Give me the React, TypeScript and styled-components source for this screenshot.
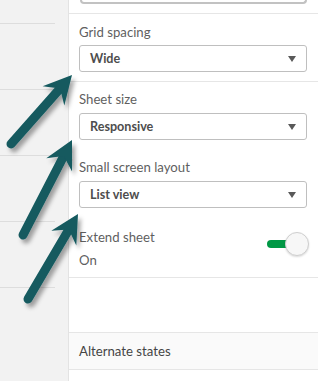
import React from "react";
import styled, { createGlobalStyle } from "styled-components";

const Global = createGlobalStyle`
  html, body { margin: 0; padding: 0; background: #fff; }
  body { font-family: "Source Sans Pro", Lato, "Noto Sans", sans-serif; }
  * { box-sizing: border-box; }
`;

const Page = styled.div`
  position: relative;
  width: 318px;
  height: 381px;
  overflow: hidden;
  display: flex;
`;

const LeftPanel = styled.div`
  width: 69px;
  flex: none;
  background: #f2f2f2;
  border-right: 1px solid #e3e3e3;
  display: flex;
  flex-direction: column;
  padding-top: 23px;
  gap: 65px;
`;

const LeftRule = styled.div`
  width: 55px;
  height: 1px;
  background: #dddddd;
`;

const RightPanel = styled.div`
  flex: 1;
  display: flex;
  flex-direction: column;
  background: #fff;
`;

const TopSection = styled.div`
  height: 14px;
  border-bottom: 1px solid #e6e6e6;
  padding: 0 11px 0 11px;
`;

const ClippedBox = styled.div`
  height: 4px;
  border: 2px solid #c2c2c2;
  border-top: none;
  border-radius: 0 0 4px 4px;
`;

const Group = styled.div<{ $pt: number; $pb: number }>`
  padding: ${(p) => p.$pt}px 11px ${(p) => p.$pb}px 10px;
  border-bottom: 1px solid #e6e6e6;
  display: flex;
  flex-direction: column;
`;

const Label = styled.div<{ $mt?: number }>`
  font-size: 13.2px;
  line-height: 18px;
  color: #5f5f5f;
  margin-top: ${(p) => p.$mt ?? 0}px;
`;

const Select = styled.div<{ $mt: number }>`
  margin-top: ${(p) => p.$mt}px;
  height: 27px;
  border: 1px solid #bfbfbf;
  border-radius: 3px;
  display: flex;
  align-items: center;
  justify-content: space-between;
  padding: 0 10px 0 10px;
  font-size: 12.6px;
  font-weight: 700;
  color: #4d4d4d;
`;

const Caret = styled.span`
  width: 0;
  height: 0;
  border-left: 4.5px solid transparent;
  border-right: 4.5px solid transparent;
  border-top: 6px solid #595959;
`;

const SwitchRow = styled.div`
  margin-top: 20px;
  display: flex;
  justify-content: space-between;
  align-items: flex-start;
`;

const SwitchText = styled.div`
  display: flex;
  flex-direction: column;
  gap: 5px;
`;

const Value = styled.div`
  font-size: 13.2px;
  line-height: 18px;
  color: #5f5f5f;
`;

const Toggle = styled.div`
  position: relative;
  width: 42px;
  height: 24px;
  margin-top: 4px;
  margin-right: -2px;
`;

const Track = styled.div`
  position: absolute;
  left: 0;
  top: 8px;
  width: 30px;
  height: 8px;
  border-radius: 4px;
  background: #009845;
`;

const Knob = styled.div`
  position: absolute;
  right: 0;
  top: 0;
  width: 24px;
  height: 24px;
  border-radius: 50%;
  background: #f7f7f7;
  border: 1px solid #cfcfcf;
  box-shadow: 0 1px 2px rgba(0, 0, 0, 0.15);
`;

const Spacer = styled.div`
  height: 55px;
  border-bottom: 1px solid #e6e6e6;
`;

const SectionHeader = styled.div`
  height: 37px;
  background: #fafafa;
  border-bottom: 1px solid #e6e6e6;
  display: flex;
  align-items: center;
  padding-left: 10px;
  font-size: 13.2px;
  color: #454545;
`;

const Overlay = styled.svg`
  position: absolute;
  left: 0;
  top: 0;
  pointer-events: none;
`;

type Pt = [number, number];

function Arrow({ tail, tip }: { tail: Pt; tip: Pt }) {
  const dx = tip[0] - tail[0];
  const dy = tip[1] - tail[1];
  const len = Math.hypot(dx, dy);
  const ux = dx / len;
  const uy = dy / len;
  const px = -uy;
  const py = ux;
  const headLen = 28;
  const half = 14.5;
  const notch = 18;
  const bx = tip[0] - ux * headLen;
  const by = tip[1] - uy * headLen;
  const left: Pt = [bx + px * half, by + py * half];
  const right: Pt = [bx - px * half, by - py * half];
  const n: Pt = [tip[0] - ux * notch, tip[1] - uy * notch];
  const shaftEnd: Pt = [tip[0] - ux * (notch - 2), tip[1] - uy * (notch - 2)];
  return (
    <g>
      <line
        x1={tail[0]}
        y1={tail[1]}
        x2={shaftEnd[0]}
        y2={shaftEnd[1]}
        stroke="#145a5f"
        strokeWidth={9}
        strokeLinecap="round"
      />
      <polygon
        points={`${tip[0]},${tip[1]} ${left[0]},${left[1]} ${n[0]},${n[1]} ${right[0]},${right[1]}`}
        fill="#145a5f"
      />
    </g>
  );
}

export default function App() {
  return (
    <Page>
      <Global />
      <LeftPanel>
        <LeftRule />
        <LeftRule />
        <LeftRule />
        <LeftRule />
        <LeftRule />
      </LeftPanel>
      <RightPanel>
        <TopSection>
          <ClippedBox />
        </TopSection>
        <Group $pt={9} $pb={9}>
          <Label>Grid spacing</Label>
          <Select $mt={4}>
            Wide
            <Caret />
          </Select>
        </Group>
        <Group $pt={8} $pb={8}>
          <Label>Sheet size</Label>
          <Select $mt={5}>
            Responsive
            <Caret />
          </Select>
          <Label $mt={18}>Small screen layout</Label>
          <Select $mt={5}>
            List view
            <Caret />
          </Select>
          <SwitchRow>
            <SwitchText>
              <Label>Extend sheet</Label>
              <Value>On</Value>
            </SwitchText>
            <Toggle>
              <Track />
              <Knob />
            </Toggle>
          </SwitchRow>
        </Group>
        <Spacer />
        <SectionHeader>Alternate states</SectionHeader>
      </RightPanel>
      <Overlay width={318} height={381} viewBox="0 0 318 381">
        <defs>
          <filter id="sh" x="-30%" y="-30%" width="160%" height="160%">
            <feDropShadow dx="3" dy="4" stdDeviation="2" floodColor="#000" floodOpacity="0.35" />
          </filter>
        </defs>
        <g filter="url(#sh)">
          <Arrow tail={[11, 144]} tip={[72, 75]} />
          <Arrow tail={[23, 235]} tip={[72, 140]} />
          <Arrow tail={[28, 299]} tip={[78, 214]} />
        </g>
      </Overlay>
    </Page>
  );
}
